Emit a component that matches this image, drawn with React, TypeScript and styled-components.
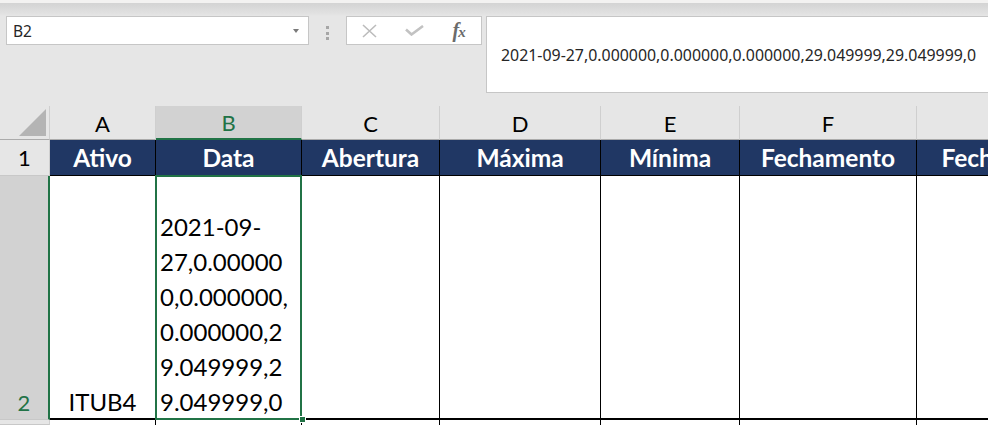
import React from "react";
import styled, { createGlobalStyle } from "styled-components";

const Global = createGlobalStyle`
  html, body { margin: 0; padding: 0; }
  body {
    width: 988px;
    height: 425px;
    overflow: hidden;
    background: #ffffff;
    font-family: "Noto Sans", "Open Sans", sans-serif;
  }
`;

const GREEN = "#217346";

const Window = styled.div`
  width: 988px;
  height: 425px;
  overflow: hidden;
  display: flex;
  flex-direction: column;
  background: #fff;
`;

const TitleEdge = styled.div`
  flex: none;
  height: 3px;
  background: #f3f2f1;
`;

const FormulaArea = styled.div`
  flex: none;
  height: 103px;
  box-sizing: border-box;
  padding: 13px 0 0 6px;
  background: linear-gradient(#d3d3d3 0px, #e2e2e2 11px, #e6e6e6 13px);
  display: flex;
  align-items: flex-start;
`;

const NameBox = styled.div`
  box-sizing: border-box;
  width: 303px;
  height: 29px;
  border: 1px solid #c6c6c6;
  background: #fff;
  display: flex;
  align-items: center;
  justify-content: space-between;
  padding: 0 9px 0 6px;
  font-size: 15.5px;
  color: #262626;
`;

const DropArrow = styled.span`
  width: 0;
  height: 0;
  border-left: 3.5px solid transparent;
  border-right: 3.5px solid transparent;
  border-top: 4px solid #7a7a7a;
`;

const Grip = styled.div`
  width: 37px;
  height: 29px;
  box-sizing: border-box;
  padding-top: 10px;
  display: flex;
  flex-direction: column;
  align-items: center;
  gap: 2.5px;
`;

const GripDot = styled.span`
  width: 3px;
  height: 3px;
  background: #a6a6a6;
`;

const ButtonBox = styled.div`
  box-sizing: border-box;
  width: 136px;
  height: 29px;
  border: 1px solid #c6c6c6;
  background: #fff;
  display: flex;
  align-items: center;
`;

const BarButton = styled.div`
  width: 45px;
  height: 100%;
  display: flex;
  align-items: center;
  justify-content: center;
`;

const Fx = styled.span`
  font-family: "Liberation Serif", "DejaVu Serif", serif;
  font-style: italic;
  font-weight: bold;
  color: #6b6b6b;
  font-size: 20px;
  line-height: 1;
  letter-spacing: -1px;
  margin-top: -2px;
  & small {
    font-size: 15px;
  }
`;

const FormulaBar = styled.div`
  box-sizing: border-box;
  margin-left: 4px;
  flex: 1;
  margin-right: -10px;
  height: 77px;
  border: 1px solid #c6c6c6;
  background: #fff;
  display: flex;
  align-items: center;
  padding: 0 0 0 14px;
  font-size: 15.9px;
  color: #262626;
  white-space: nowrap;
`;

const Sheet = styled.div`
  flex: 1;
  display: grid;
  grid-template-columns: 50px 106px 146px 138px 161px 139px 177px 184px;
  grid-template-rows: 34px 36px 244px 1fr;
  width: max-content;
  font-family: Lato, "Open Sans", sans-serif;
`;

const Corner = styled.div`
  box-sizing: border-box;
  background: #e6e6e6;
  border-right: 1px solid #cfcfcf;
  border-bottom: 1px solid #ababab;
  display: flex;
  align-items: flex-end;
  justify-content: flex-end;
  padding: 0 3px 3px 0;
`;

const ColHeader = styled.div<{ $selected?: boolean }>`
  box-sizing: border-box;
  background: ${(p) => (p.$selected ? "#d2d2d2" : "#e6e6e6")};
  color: ${(p) => (p.$selected ? GREEN : "#000")};
  border-right: 1px solid #cfcfcf;
  border-bottom: ${(p) => (p.$selected ? `2px solid ${GREEN}` : "1px solid #ababab")};
  display: flex;
  align-items: center;
  justify-content: center;
  font-size: 22px;
  padding-top: 1px;
`;

const RowHeader = styled.div<{ $selected?: boolean; $bottom?: boolean }>`
  box-sizing: border-box;
  background: ${(p) => (p.$selected ? "#d2d2d2" : "#e6e6e6")};
  color: ${(p) => (p.$selected ? GREEN : "#000")};
  border-right: ${(p) => (p.$selected ? `2px solid ${GREEN}` : "1px solid #cfcfcf")};
  border-bottom: 1px solid #c8c8c8;
  display: flex;
  justify-content: center;
  align-items: ${(p) => (p.$bottom ? "flex-end" : "center")};
  font-size: 22px;
  line-height: 35px;
`;

const HeadCell = styled.div`
  box-sizing: border-box;
  background: #203764;
  color: #fff;
  border-right: 1px solid #000;
  border-bottom: 1px solid #000;
  display: flex;
  align-items: center;
  justify-content: center;
  font-size: 24.5px;
  font-weight: 700;
  white-space: nowrap;
`;

const DataCell = styled.div<{ $align?: "left" | "center"; $last?: boolean; $selected?: boolean }>`
  box-sizing: border-box;
  position: relative;
  background: #fff;
  color: #000;
  border-right: 1px solid #000;
  border-bottom: ${(p) => (p.$last ? "none" : "2px solid #000")};
  display: flex;
  align-items: flex-end;
  justify-content: ${(p) => (p.$align === "left" ? "flex-start" : "center")};
  padding: 0 4px;
  font-size: 24px;
  line-height: 35px;
  white-space: pre-line;
  ${(p) =>
    p.$selected
      ? `
    z-index: 2;
    &::after {
      content: "";
      position: absolute;
      left: -1px;
      right: -1px;
      top: -1px;
      bottom: -2px;
      border: 2px solid ${GREEN};
      pointer-events: none;
    }
    &::before {
      content: "";
      position: absolute;
      right: -4px;
      bottom: -4px;
      width: 5px;
      height: 5px;
      background: ${GREEN};
      outline: 1px solid #fff;
      z-index: 3;
    }
  `
      : ""}
`;

const CellText = styled.span`
  margin-bottom: -1px;
`;

const columns = ["A", "B", "C", "D", "E", "F", "G"];
const heads = ["Ativo", "Data", "Abertura", "Máxima", "Mínima", "Fechamento", "Fechamento"];
const formula = "2021-09-27,0.000000,0.000000,0.000000,29.049999,29.049999,0";
const wrapped = ["2021-09-", "27,0.00000", "0,0.000000,", "0.000000,2", "9.049999,2", "9.049999,0"].join("\n");

export default function App() {
  return (
    <Window>
      <Global />
      <TitleEdge />
      <FormulaArea>
        <NameBox>
          <span>B2</span>
          <DropArrow />
        </NameBox>
        <Grip>
          <GripDot />
          <GripDot />
          <GripDot />
        </Grip>
        <ButtonBox>
          <BarButton>
            <svg width="15" height="14" viewBox="0 0 15 14">
              <path d="M1 1 L14 13 M14 1 L1 13" stroke="#bcbcbc" strokeWidth="1.6" fill="none" />
            </svg>
          </BarButton>
          <BarButton>
            <svg width="19" height="11" viewBox="0 0 19 11">
              <path d="M1 4.5 L6.5 9.5 L18 1" stroke="#c2c2c2" strokeWidth="2.6" fill="none" />
            </svg>
          </BarButton>
          <BarButton>
            <Fx>
              f<small>x</small>
            </Fx>
          </BarButton>
        </ButtonBox>
        <FormulaBar>{formula}</FormulaBar>
      </FormulaArea>
      <Sheet>
        <Corner>
          <svg width="27" height="27" viewBox="0 0 27 27">
            <polygon points="27,0 27,27 0,27" fill="#b4b4b4" />
          </svg>
        </Corner>
        {columns.map((c) => (
          <ColHeader key={c} $selected={c === "B"}>
            {c}
          </ColHeader>
        ))}

        <RowHeader>1</RowHeader>
        {heads.map((h, i) => (
          <HeadCell key={i}>{h}</HeadCell>
        ))}

        <RowHeader $selected $bottom>
          <CellText>2</CellText>
        </RowHeader>
        <DataCell>
          <CellText>ITUB4</CellText>
        </DataCell>
        <DataCell $align="left" $selected>
          <CellText>{wrapped}</CellText>
        </DataCell>
        {columns.slice(2).map((c) => (
          <DataCell key={c} />
        ))}

        <RowHeader />
        {columns.map((c) => (
          <DataCell key={c} $last />
        ))}
      </Sheet>
    </Window>
  );
}
